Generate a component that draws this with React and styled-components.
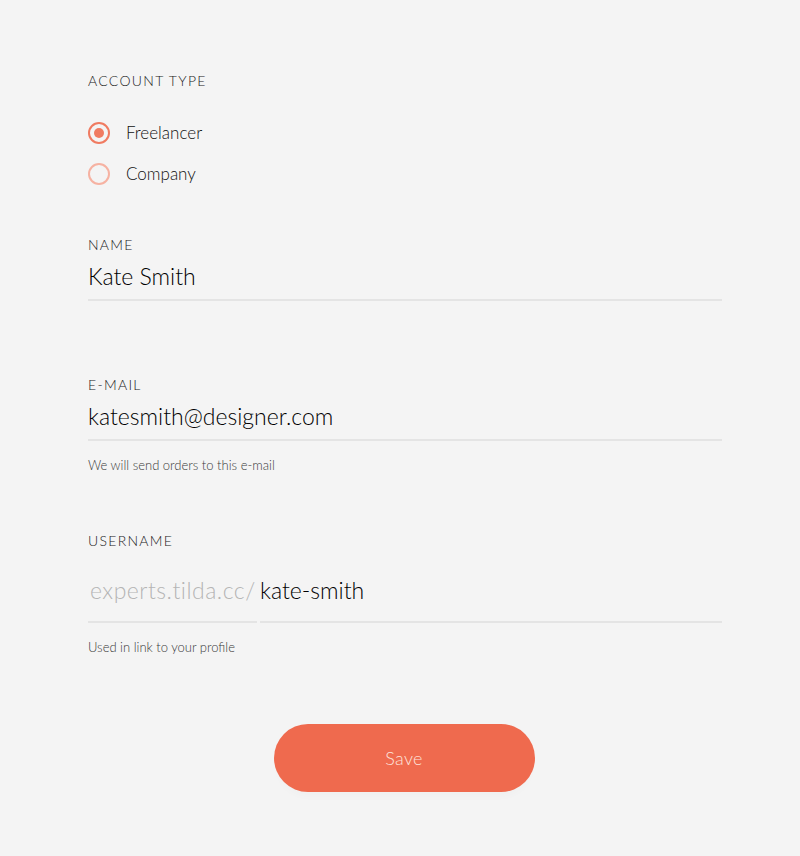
import React, { useState } from "react";
import styled, { createGlobalStyle } from "styled-components";

const GlobalStyle = createGlobalStyle`
  html, body {
    margin: 0;
    padding: 0;
    background: #f4f4f4;
  }
  body {
    font-family: "Lato", "Open Sans", sans-serif;
    -webkit-font-smoothing: antialiased;
  }
`;

const Page = styled.div`
  width: 800px;
  min-height: 856px;
  background: #f4f4f4;
  box-sizing: border-box;
  padding: 72px 78px 0 88px;
`;

const Form = styled.form`
  display: flex;
  flex-direction: column;
`;

const Section = styled.div`
  display: flex;
  flex-direction: column;
  margin-bottom: ${(p) => p.$gap || 0}px;
`;

const Label = styled.div`
  font-size: 14px;
  line-height: 17px;
  letter-spacing: 1.3px;
  text-transform: uppercase;
  color: #222;
  font-weight: 300;
`;

const RadioGroup = styled.div`
  display: flex;
  flex-direction: column;
  gap: 19px;
  margin-top: 33px;
`;

const RadioRow = styled.label`
  display: flex;
  align-items: center;
  gap: 16px;
  cursor: pointer;
  font-size: 17px;
  line-height: 22px;
  font-weight: 300;
  color: #111;
`;

const RadioMark = styled.span`
  width: 22px;
  height: 22px;
  box-sizing: border-box;
  border-radius: 50%;
  border: 2px solid ${(p) => (p.$checked ? "#f07b61" : "#f6b2a2")};
  display: flex;
  align-items: center;
  justify-content: center;

  &::after {
    content: "";
    width: 10px;
    height: 10px;
    border-radius: 50%;
    background: #f07b61;
    display: ${(p) => (p.$checked ? "block" : "none")};
  }
`;

const Input = styled.input`
  font-family: inherit;
  font-size: 23px;
  font-weight: 300;
  color: #000;
  background: transparent;
  border: none;
  border-bottom: 2px solid #e4e4e4;
  outline: none;
  padding: 9px 0 9px;
  width: 100%;
  box-sizing: border-box;
`;

const Hint = styled.div`
  margin-top: 16px;
  font-size: 13px;
  line-height: 16px;
  color: #3a3a3a;
  font-weight: 300;
`;

const PrefixRow = styled.div`
  display: flex;
  gap: 3px;
  margin-top: 20px;
`;

const Prefix = styled.div`
  width: 167px;
  flex: none;
  padding: 6px 0 16px 2px;
  font-size: 23px;
  font-weight: 300;
  letter-spacing: 0.5px;
  color: #b5b5b5;
  border-bottom: 2px solid #e4e4e4;
  white-space: nowrap;
  line-height: 30px;
`;

const SlugInput = styled(Input)`
  flex: 1;
  width: auto;
  line-height: 30px;
  padding: 6px 0 16px;
`;

const ButtonRow = styled.div`
  display: flex;
  justify-content: center;
  padding-right: 2px;
`;

const SaveButton = styled.button`
  width: 261px;
  height: 68px;
  border-radius: 34px;
  border: none;
  background: #ef6a4e;
  color: #fde3dc;
  font-family: inherit;
  font-size: 18px;
  font-weight: 300;
  letter-spacing: 0.3px;
  cursor: pointer;
  box-shadow: 0 8px 8px -4px rgba(0, 0, 0, 0.02);
`;

export default function App() {
  const [type, setType] = useState("freelancer");

  return (
    <Page>
      <GlobalStyle />
      <Form onSubmit={(e) => e.preventDefault()}>
        <Section $gap={51}>
          <Label>Account type</Label>
          <RadioGroup>
            <RadioRow onClick={() => setType("freelancer")}>
              <RadioMark $checked={type === "freelancer"} />
              Freelancer
            </RadioRow>
            <RadioRow onClick={() => setType("company")}>
              <RadioMark $checked={type === "company"} />
              Company
            </RadioRow>
          </RadioGroup>
        </Section>

        <Section $gap={75}>
          <Label>Name</Label>
          <Input defaultValue="Kate Smith" />
        </Section>

        <Section $gap={59}>
          <Label>E-mail</Label>
          <Input defaultValue="katesmith@designer.com" />
          <Hint>We will send orders to this e-mail</Hint>
        </Section>

        <Section $gap={69}>
          <Label>Username</Label>
          <PrefixRow>
            <Prefix>experts.tilda.cc/</Prefix>
            <SlugInput defaultValue="kate-smith" />
          </PrefixRow>
          <Hint>Used in link to your profile</Hint>
        </Section>

        <ButtonRow>
          <SaveButton type="submit">Save</SaveButton>
        </ButtonRow>
      </Form>
    </Page>
  );
}
